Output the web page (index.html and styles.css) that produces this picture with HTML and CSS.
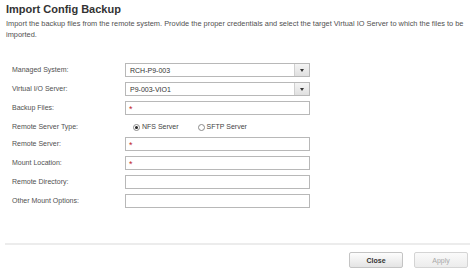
FILE: index.html
```html
<!DOCTYPE html>
<html lang="en">
<head>
    <meta charset="UTF-8">
    <title>Import Config Backup</title>
    <link rel="stylesheet" href="styles.css">
</head>
<body>
    <div class="dialog">
        <h1 class="title">Import Config Backup</h1>
        <p class="desc">Import the backup files from the remote system. Provide the proper credentials and select the target Virtual IO Server to which the files to be imported.</p>

        <form class="form">
            <div class="row">
                <span class="label">Managed System:</span>
                <div class="select">
                    <span class="value">RCH-P9-003</span>
                    <span class="arrow"></span>
                </div>
            </div>
            <div class="row">
                <span class="label">Virtual I/O Server:</span>
                <div class="select">
                    <span class="value">P9-003-VIO1</span>
                    <span class="arrow"></span>
                </div>
            </div>
            <div class="row">
                <span class="label">Backup Files:</span>
                <div class="field"><span class="req">*</span></div>
            </div>
            <div class="row radioRow">
                <span class="label">Remote Server Type:</span>
                <div class="radios">
                    <span class="radio"><span class="dot on"></span>NFS Server</span>
                    <span class="radio"><span class="dot"></span>SFTP Server</span>
                </div>
            </div>
            <div class="row">
                <span class="label">Remote Server:</span>
                <div class="field"><span class="req">*</span></div>
            </div>
            <div class="row">
                <span class="label">Mount Location:</span>
                <div class="field"><span class="req">*</span></div>
            </div>
            <div class="row">
                <span class="label">Remote Directory:</span>
                <div class="field"></div>
            </div>
            <div class="row">
                <span class="label">Other Mount Options:</span>
                <div class="field"></div>
            </div>
        </form>

        <div class="footer">
            <button type="button" class="btn">Close</button>
            <button type="button" class="btn disabled">Apply</button>
        </div>
    </div>
</body>
</html>
```

FILE: styles.css
```css
*{
    margin: 0;
    padding: 0;
    box-sizing: border-box;
}

body{
    background: #fff;
    color: #444;
    font-family: "Liberation Sans", Arial, sans-serif;
}

.dialog{
    padding: 2px 5px 0 6px;
}

.title{
    font-size: 11px;
    line-height: 14px;
    font-weight: bold;
    color: #333;
}

.desc{
    margin-top: 2px;
    width: 462px;
    font-size: 7.4px;
    line-height: 11px;
    color: #505050;
}

/* form rows */
.form{
    margin-top: 23px;
    padding-left: 6px;
}

.row{
    display: flex;
    align-items: flex-start;
    height: 19px;
}

.radioRow{
    height: 17px;
}

.label{
    width: 113px;
    font-size: 7px;
    line-height: 14px;
    color: #505050;
}

.select, .field{
    width: 185px;
    height: 14px;
    border: 1px solid #b8b8b8;
    background: #fff;
    display: flex;
    align-items: center;
}

.value{
    flex: 1;
    padding-left: 4px;
    font-size: 7px;
    color: #333;
}

.arrow{
    width: 15px;
    height: 12px;
    background: linear-gradient(#f4f4f4, #e0e0e0);
    border-left: 1px solid #d0d0d0;
    position: relative;
}

.arrow::after{
    content: "";
    position: absolute;
    left: 5px;
    top: 5px;
    border-left: 2.5px solid transparent;
    border-right: 2.5px solid transparent;
    border-top: 3px solid #333;
}

.req{
    padding-left: 3px;
    color: #c0282d;
    font-size: 9px;
    line-height: 12px;
    margin-top: 2px;
}

/* radios */
.radios{
    display: flex;
    gap: 19px;
    padding-left: 8px;
    padding-top: 3px;
}

.radio{
    display: flex;
    align-items: center;
    gap: 2px;
    font-size: 7px;
    line-height: 8px;
    color: #444;
}

.dot{
    width: 7px;
    height: 7px;
    border-radius: 50%;
    border: 1px solid #8a8a8a;
    background: #fff;
    position: relative;
}

.dot.on::after{
    content: "";
    position: absolute;
    left: 1px;
    top: 1px;
    width: 3px;
    height: 3px;
    border-radius: 50%;
    background: #222;
}

/* footer */
.footer{
    margin-top: 30px;
    border-top: 2px solid #ececec;
    margin-left: -1px;
    margin-right: -1px;
    display: flex;
    justify-content: flex-end;
    gap: 11px;
    padding-top: 7px;
    padding-right: 2px;
}

.btn{
    width: 54px;
    height: 16px;
    border: 1px solid #c4c4c4;
    border-radius: 2px;
    background: linear-gradient(#fdfdfd, #e4e4e4);
    font-family: "Liberation Sans", Arial, sans-serif;
    font-size: 7px;
    font-weight: bold;
    color: #333;
}

.btn.disabled{
    font-weight: normal;
    color: #a8a8a8;
    border-color: #d4d4d4;
    background: linear-gradient(#fafafa, #ececec);
}
```
